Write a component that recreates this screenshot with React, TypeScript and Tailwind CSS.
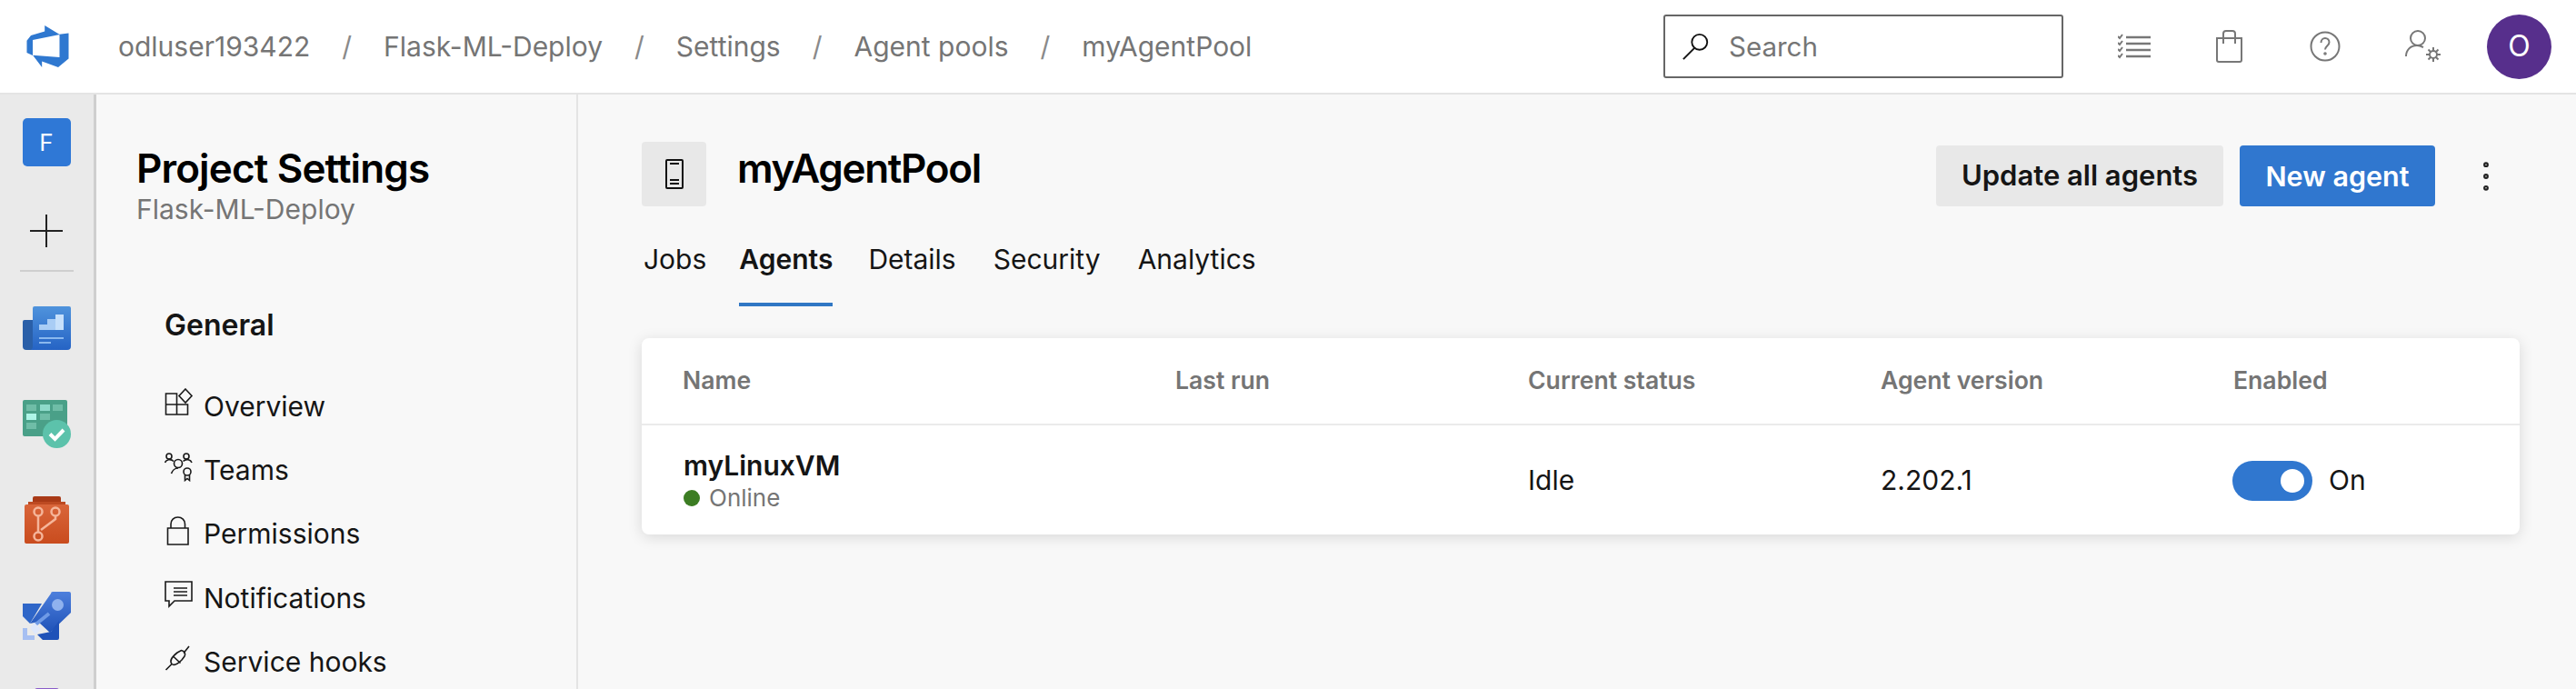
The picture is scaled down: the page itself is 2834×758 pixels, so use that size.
import { MoreVertical } from 'lucide-react';

const crumbs = ['odluser193422', 'Flask-ML-Deploy', 'Settings', 'Agent pools', 'myAgentPool'];

function Logo() {
  return (
    <svg width="47" height="46" viewBox="1 1 14 14" className="shrink-0">
      <path
        d="M15 3.622v8.512L11.5 15l-5.425-1.975v1.958L3.004 10.97l8.951.7V4.005L15 3.622zm-2.984.428L6.994 1v2.001L2.382 4.356 1 6.13v4.029l1.978.873V5.869l9.038-1.818z"
        fill="#2f78d0"
      />
    </svg>
  );
}

function BoardsIcon() {
  return (
    <svg width="53" height="48" viewBox="0 0 53 48">
      <defs>
        <linearGradient id="bd" x1="0" y1="0" x2="0" y2="1">
          <stop offset="0" stopColor="#4f93dc" />
          <stop offset="1" stopColor="#2563c4" />
        </linearGradient>
      </defs>
      <path d="M2 15h14v33H4a4 4 0 0 1-4-4V17a2 2 0 0 1 2-2z" fill="#2a5fa8" />
      <path d="M11 2a2 2 0 0 1 2-2h38a2 2 0 0 1 2 2v42a4 4 0 0 1-4 4H9a4 4 0 0 0 2-4z" fill="url(#bd)" />
      <path d="M18 26v-6h9v-6h9V9h9v17z" fill="#a9cdf5" />
      <path d="M36 9h9v17h-9z" fill="#c6e0fb" />
      <path d="M18 34h27v2H18zM18 39h13v2H18z" fill="#8ab8ee" />
    </svg>
  );
}

function PlanIcon() {
  return (
    <svg width="53" height="53" viewBox="0 0 53 53">
      <rect x="0" y="0" width="49" height="40" rx="2" fill="#4aa088" />
      <rect x="4" y="5" width="11" height="7" fill="#6fbda7" />
      <rect x="19" y="5" width="11" height="7" fill="#8edaca" />
      <rect x="33" y="5" width="11" height="7" fill="#6fbda7" />
      <rect x="4" y="15" width="11" height="7" fill="#aef5e7" />
      <rect x="19" y="15" width="11" height="7" fill="#6fbda7" />
      <rect x="4" y="25" width="11" height="7" fill="#6fbda7" />
      <circle cx="37.500" cy="37.500" r="15.500" fill="#5cc2ab" />
      <path d="M30 37.500 L35.500 43 L45 33" fill="none" stroke="#fff" strokeWidth="4" />
    </svg>
  );
}

function RepoIcon() {
  return (
    <svg width="49" height="52" viewBox="0 0 49 52">
      <defs>
        <linearGradient id="rp" x1="0" y1="0" x2="0" y2="1">
          <stop offset="0" stopColor="#d9653a" />
          <stop offset="1" stopColor="#c94c1e" />
        </linearGradient>
      </defs>
      <path d="M9 2a2 2 0 0 1 2-2h27a2 2 0 0 1 2 2v8H9z" fill="#a93a17" />
      <path d="M4 6h41v8H4z" fill="#bd4a22" />
      <path d="M2 9h45a2 2 0 0 1 2 2v39a2 2 0 0 1-2 2H2a2 2 0 0 1-2-2V11a2 2 0 0 1 2-2z" fill="url(#rp)" />
      <g fill="none" stroke="#f5b59a" strokeWidth="2.500">
        <circle cx="15" cy="17" r="4.500" />
        <circle cx="34" cy="17" r="4.500" />
        <circle cx="15" cy="44" r="4.500" />
        <path d="M15 22v17M34 22v3L18 37" />
      </g>
    </svg>
  );
}

function PipelinesIcon() {
  return (
    <svg width="53" height="53" viewBox="0 0 53 53">
      <defs>
        <linearGradient id="pp" x1="0" y1="0" x2="0" y2="1">
          <stop offset="0" stopColor="#4d7fdc" />
          <stop offset="1" stopColor="#1f52b8" />
        </linearGradient>
      </defs>
      <path d="M0 13h21L8 35 0 27z" fill="#2f66c8" />
      <path d="M31 2a2 2 0 0 1 2-2h18a2 2 0 0 1 2 2v21L30 45 17 33 8 35z" fill="url(#pp)" />
      <path d="M22 53l-6-6 15-3 9-12v19a2 2 0 0 1-2 2z" fill="#1f52b8" />
      <circle cx="38.500" cy="14.500" r="6.500" fill="#8fb2ee" />
      <path d="M13 37 L29 24" stroke="#6f9ae6" strokeWidth="4" />
      <path d="M0 40h5v8h8l0 5H0z" fill="#a6bff2" />
      <path d="M8 40 L13 34 L20 41 L14 47 Z" fill="#dfe8fb" />
    </svg>
  );
}

function NavIcon({ name }: { name: string }) {
  const common = { fill: 'none', stroke: '#1a1a1a', strokeWidth: 1.600 };
  return (
    <svg width="32" height="32" viewBox="0 0 32 32" className="mb-[8px] shrink-0">
      {name === 'Overview' && (
        <g {...common}>
          <path d="M1.500 6h12v23h-12zM1.500 18h24v11h-12" />
          <path d="M23 1 L30 8.500 L23 16 L16 8.500 Z" />
        </g>
      )}
      {name === 'Teams' && (
        <g {...common}>
          <circle cx="5" cy="4" r="3" />
          <circle cx="24" cy="4" r="3" />
          <circle cx="15" cy="12" r="4.500" />
          <circle cx="25" cy="21" r="4" />
          <path d="M0.500 11c1-3 6-5 9.500-1.500M30 11c-1-3-6-5-9.500-1.500M7.500 23c1-3 4-6 7.500-6M22.500 24.500v6l2.500-2 2.500 2v-6" />
        </g>
      )}
      {name === 'Permissions' && (
        <g {...common}>
          <path d="M3.500 13h22.500v18h-22.500zM7 13V8.500c0-4.500 3.200-7.500 7.700-7.500s7.800 3 7.800 7.500V13" />
        </g>
      )}
      {name === 'Notifications' && (
        <g {...common}>
          <path d="M1 2h29v21H11l-6 6v-6H1zM10 9h15M10 13h15M10 17h15" />
        </g>
      )}
      {name === 'Service hooks' && (
        <g {...common}>
          <path d="M1.500 28 L8 21.500M21 9.500 L27 2M8 21.500 C4.500 17 9.500 12.500 14 9 L18.500 6.500 C22 7 23.500 10 22 13 L19 17 C15 21 11 24 8 21.500 Z M9.500 13 L17.500 20.500" />
        </g>
      )}
    </svg>
  );
}

function AgentIcon() {
  return (
    <svg width="20" height="33" viewBox="0 0 20 33" fill="none" stroke="#111" strokeWidth="2">
      <rect x="1" y="1" width="18" height="31" rx="1" />
      <path d="M5 5h10M5 23h10M5 27h10" strokeWidth="2" />
    </svg>
  );
}

export default function App() {
  return (
    <div className="flex h-[758px] w-[2834px] flex-col overflow-hidden bg-[#f8f8f8] font-['Inter',sans-serif] text-[#151515]">
      <header className="flex h-[104px] shrink-0 items-center border-b-2 border-[#e4e4e4] bg-white pr-[27px]">
        <div className="ml-[29px] flex items-center">
          <Logo />
        </div>
        <nav className="ml-[54px] flex items-center text-[30px] text-[#757575]">
          {crumbs.map((c, i) => (
            <span key={c} className="flex items-center">
              {i > 0 && <span className="mx-[35px] text-[#8a8a8a]">/</span>}
              <span>{c}</span>
            </span>
          ))}
        </nav>
        <div className="ml-auto flex h-[70px] w-[440px] items-center rounded-[3px] border-2 border-[#666] pl-[18px]">
          <svg width="32" height="32" viewBox="0 0 34 32" fill="none" stroke="#111" strokeWidth="2">
            <circle cx="21" cy="11" r="9" />
            <path d="M15 18 L2 31" />
          </svg>
          <span className="ml-[20px] text-[29.500px] text-[#757575]">Search</span>
        </div>
        <div className="ml-[60px] flex items-center text-[#757575]">
          <svg width="36" height="28" viewBox="0 0 36 28" fill="none" stroke="#777" strokeWidth="2">
            <path d="M9 4h27M9 11h27M9 18h27M9 25h27" strokeWidth="2.500" />
            <path d="M0 3l2 2 3-4M0 10l2 2 3-4M0 17l2 2 3-4M0 24l2 2 3-4" />
          </svg>
          <svg className="ml-[72px]" width="29" height="36" viewBox="0 0 29 36" fill="none" stroke="#777" strokeWidth="2">
            <path d="M1 9h27v24a2 2 0 0 1-2 2H3a2 2 0 0 1-2-2zM8 15V4a3 3 0 0 1 3-3h7a3 3 0 0 1 3 3v11" />
          </svg>
          <svg className="ml-[74px]" width="34" height="34" viewBox="0 0 34 34" fill="none" stroke="#777" strokeWidth="2">
            <circle cx="17" cy="17" r="15.500" />
            <path d="M12.500 13c0-3 2-5 4.500-5s4.500 2 4.500 4.500c0 4-4.500 4-4.500 8" />
            <circle cx="17" cy="25" r="0.800" />
          </svg>
          <svg className="ml-[71px]" width="40" height="36" viewBox="0 0 40 36" fill="none" stroke="#777" strokeWidth="2">
            <circle cx="14" cy="9" r="8" />
            <path d="M1 29c0-7 5-12 12-12 3 0 5 1 7 2" />
            <circle cx="31" cy="27" r="4" />
            <path d="M31 19v4M31 31v4M23 27h4M35 27h4M25.500 21.500l3 3M33.500 29.500l3 3M36.500 21.500l-3 3M28.500 29.500l-3 3" />
          </svg>
          <div className="ml-[50px] flex h-[71px] w-[71px] items-center justify-center rounded-full bg-[#572f8c] text-[32px] text-white">
            O
          </div>
        </div>
      </header>

      <div className="flex min-h-0 flex-1">
        <aside className="flex w-[106px] shrink-0 flex-col items-center overflow-hidden border-r-[3px] border-[#cfcfcf] bg-[#eaeaea] pr-[1px] *:shrink-0">
          <div className="mt-[26px] flex h-[53px] w-[53px] items-center justify-center rounded-[5px] bg-[#2f78d6] text-[26px] text-white">
            F
          </div>
          <svg className="mt-[53px]" width="36" height="36" viewBox="0 0 36 36" stroke="#222" strokeWidth="2">
            <path d="M0 18h36M18 0v36" />
          </svg>
          <div className="mt-[25px] h-[2px] w-[59px] bg-[#cfcfcf]" />
          <div className="mt-[38px] h-[48px]">
            <BoardsIcon />
          </div>
          <div className="mt-[55px] h-[53px]">
            <PlanIcon />
          </div>
          <div className="mt-[53px] h-[52px]">
            <RepoIcon />
          </div>
          <div className="mt-[53px] h-[53px]">
            <PipelinesIcon />
          </div>
          <div className="mt-[53px] h-[10px] w-[27px] rounded-t-[3px] bg-[#8a5cc9]" />
        </aside>

        <section className="w-[530px] shrink-0 border-r-2 border-[#e4e4e4] pl-[44px]">
          <h1 className="mt-[56px] text-[44px] leading-[50px] font-semibold tracking-[-0.850px] text-black">Project Settings</h1>
          <p className="text-[30px] leading-[40px] text-[#757575]">Flask-ML-Deploy</p>
          <h2 className="mt-[88px] ml-[31px] text-[32px] leading-[40px] font-semibold">General</h2>
          <ul className="mt-[34px] ml-[31px]">
            {['Overview', 'Teams', 'Permissions', 'Notifications', 'Service hooks'].map(item => (
              <li key={item} className="flex h-[70.400px] items-center gap-[11px] text-[30px]">
                <NavIcon name={item} />
                {item}
              </li>
            ))}
          </ul>
        </section>

        <main className="min-w-0 flex-1 pr-[62px] pl-[70px]">
          <div className="mt-[52px] flex items-start">
            <div className="flex h-[71px] w-[71px] items-center justify-center rounded-[4px] bg-[#e8e8e8]">
              <AgentIcon />
            </div>
            <h1 className="ml-[34px] text-[44px] leading-[58px] font-semibold tracking-[-1.300px] text-black">myAgentPool</h1>
            <div className="mt-[4px] ml-auto flex items-center">
              <button className="h-[67px] w-[316px] rounded-[4px] bg-[#e8e8e8] text-[31px] font-semibold text-[#151515]">Update all agents</button>
              <button className="ml-[18px] h-[67px] w-[215px] rounded-[4px] bg-[#3077cf] text-[30.500px] font-semibold text-white">New agent</button>
              <MoreVertical className="mr-[15px] ml-[34px]" size={44} strokeWidth={1.200} color="#222" />
            </div>
          </div>

          <div className="mt-[36px] flex text-[30px]">
            <span className="mr-[36px] pb-[25px] pl-[2px]">Jobs</span>
            <span className="mr-[39px] border-b-4 border-[#3077c4] pb-[25px] font-semibold">Agents</span>
            <span className="mr-[41px] pb-[25px]">Details</span>
            <span className="mr-[41px] pb-[25px]">Security</span>
            <span className="pb-[25px]">Analytics</span>
          </div>

          <div className="mt-[35px] h-[216px] w-[2066px] rounded-[8px] bg-white shadow-[0_3px_16px_rgba(0,0,0,0.13)]">
            <div className="grid h-[96px] grid-cols-[542px_388px_388px_388px_1fr] items-center border-b-2 border-[#ebebeb] pl-[45px] text-[26.600px] font-semibold text-[#757575]">
              <span>Name</span>
              <span>Last run</span>
              <span>Current status</span>
              <span>Agent version</span>
              <span>Enabled</span>
            </div>
            <div className="grid h-[119px] grid-cols-[542px_388px_388px_388px_1fr] items-center pt-[2px] pl-[45px] text-[30px]">
              <div className="pl-[1px]">
                <div className="leading-[38px] font-semibold">myLinuxVM</div>
                <div className="flex items-center text-[26px] leading-[34px] text-[#757575]">
                  <span className="mr-[10px] h-[18px] w-[18px] rounded-full bg-[#3c7d23]" />
                  Online
                </div>
              </div>
              <span />
              <span>Idle</span>
              <span>2.202.1</span>
              <div className="ml-[-1px] flex items-center">
                <span className="flex h-[44px] w-[88px] items-center justify-end rounded-full bg-[#3077cf] pr-[9px]">
                  <span className="h-[26px] w-[26px] rounded-full bg-white" />
                </span>
                <span className="ml-[18px]">On</span>
              </div>
            </div>
          </div>
        </main>
      </div>
    </div>
  );
}
